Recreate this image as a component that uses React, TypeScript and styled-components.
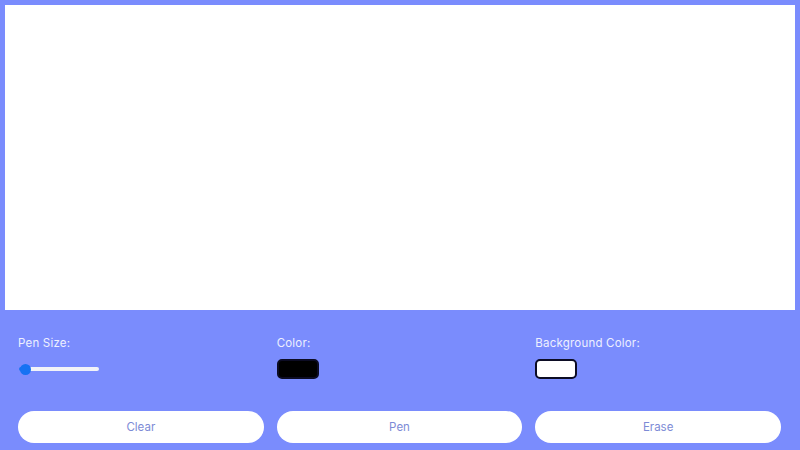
import React, { useState } from 'react'
import styled, { createGlobalStyle } from 'styled-components'

const GlobalStyle = createGlobalStyle`
  html, body {
    margin: 0;
    padding: 0;
    background: #7a8cfd;
    font-family: Inter, "Noto Sans", sans-serif;
  }
`

const Page = styled.div`
  width: 800px;
  height: 450px;
  box-sizing: border-box;
  padding: 5px;
  display: flex;
  flex-direction: column;
  background: #7a8cfd;
`

const Board = styled.div`
  height: 305px;
  background: #ffffff;
`

const Controls = styled.div`
  display: grid;
  grid-template-columns: repeat(3, 1fr);
  column-gap: 13px;
  padding: 26px 14px 0 13px;
`

const Field = styled.div`
  display: flex;
  flex-direction: column;
  height: 75px;
`

const Label = styled.span`
  font-size: 11.5px;
  color: #eef0ff;
  letter-spacing: 0.2px;
  line-height: 14px;
`

const Slider = styled.input`
  -webkit-appearance: none;
  appearance: none;
  width: 80px;
  height: 4px;
  margin: 17px 0 0 1px;
  border-radius: 2px;
  background: linear-gradient(to right, #1a73f0 0 8px, #f2f3f8 8px);
  outline: none;

  &::-webkit-slider-thumb {
    -webkit-appearance: none;
    width: 11px;
    height: 11px;
    border-radius: 50%;
    background: #1672f3;
    border: none;
  }
`

const Swatch = styled.div<{ $fill: string }>`
  width: 42px;
  height: 20px;
  box-sizing: border-box;
  margin-top: 9px;
  border-radius: 5px;
  border: 2px solid #0c0c24;
  background: ${p => p.$fill};
`

const Button = styled.button`
  height: 32px;
  border: none;
  border-radius: 16px;
  background: #ffffff;
  color: #7d8bd6;
  font-family: Inter, "Noto Sans", sans-serif;
  font-size: 11.5px;
  cursor: pointer;
`

export default function App() {
  const [size, setSize] = useState(2)
  const [mode, setMode] = useState('pen')

  return (
    <>
      <GlobalStyle />
      <Page>
        <Board data-mode={mode} />
        <Controls>
          <Field>
            <Label>Pen Size:</Label>
            <Slider
              type="range"
              min={1}
              max={50}
              value={size}
              onChange={e => setSize(Number(e.target.value))}
            />
          </Field>
          <Field>
            <Label>Color:</Label>
            <Swatch $fill="#000000" />
          </Field>
          <Field>
            <Label>Background Color:</Label>
            <Swatch $fill="#ffffff" />
          </Field>
          <Button onClick={() => setMode('clear')}>Clear</Button>
          <Button onClick={() => setMode('pen')}>Pen</Button>
          <Button onClick={() => setMode('erase')}>Erase</Button>
        </Controls>
      </Page>
    </>
  )
}
